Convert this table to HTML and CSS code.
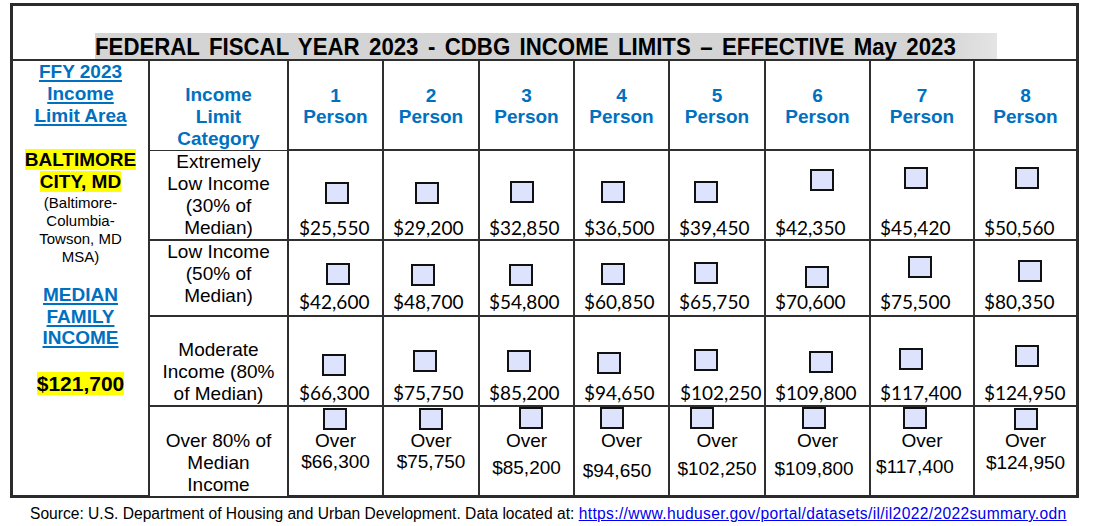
FILE: index.html
```html
<!DOCTYPE html>
<html>
<head>
<meta charset="utf-8">
<link rel="stylesheet" href="styles.css">
</head>
<body>
<div class="sheet">
  <div class="grid">
    <div class="title"><div class="title-bar"><span class="title-text">FEDERAL FISCAL YEAR 2023 - CDBG INCOME LIMITS – EFFECTIVE May 2023</span></div></div>
    <div class="area">
      <div class="blue ul head-area">FFY 2023<br>Income<br>Limit Area</div>
      <div class="city"><span class="hl">BALTIMORE<br>CITY, MD</span></div>
      <div class="msa">(Baltimore-<br>Columbia-<br>Towson, MD<br>MSA)</div>
      <div class="blue ul median">MEDIAN<br>FAMILY<br>INCOME</div>
      <div class="mfi"><span class="hl">$121,700</span></div>
    </div>
    <div class="hcat blue">Income<br>Limit<br>Category</div>
    <div class="hp blue">1<br>Person</div>
    <div class="hp blue">2<br>Person</div>
    <div class="hp blue">3<br>Person</div>
    <div class="hp blue">4<br>Person</div>
    <div class="hp blue">5<br>Person</div>
    <div class="hp blue">6<br>Person</div>
    <div class="hp blue">7<br>Person</div>
    <div class="hp blue">8<br>Person</div>

    <div class="row r1">
      <div class="cat">Extremely<br>Low Income<br>(30% of<br>Median)</div>
      <div class="d"><span class="cb"></span><span class="amt">$25,550</span></div>
      <div class="d"><span class="cb"></span><span class="amt">$29,200</span></div>
      <div class="d"><span class="cb"></span><span class="amt">$32,850</span></div>
      <div class="d"><span class="cb"></span><span class="amt">$36,500</span></div>
      <div class="d"><span class="cb"></span><span class="amt">$39,450</span></div>
      <div class="d"><span class="cb"></span><span class="amt">$42,350</span></div>
      <div class="d"><span class="cb"></span><span class="amt">$45,420</span></div>
      <div class="d"><span class="cb"></span><span class="amt">$50,560</span></div>
    </div>

    <div class="row r2">
      <div class="cat">Low Income<br>(50% of<br>Median)</div>
      <div class="d"><span class="cb"></span><span class="amt">$42,600</span></div>
      <div class="d"><span class="cb"></span><span class="amt">$48,700</span></div>
      <div class="d"><span class="cb"></span><span class="amt">$54,800</span></div>
      <div class="d"><span class="cb"></span><span class="amt">$60,850</span></div>
      <div class="d"><span class="cb"></span><span class="amt">$65,750</span></div>
      <div class="d"><span class="cb"></span><span class="amt">$70,600</span></div>
      <div class="d"><span class="cb"></span><span class="amt">$75,500</span></div>
      <div class="d"><span class="cb"></span><span class="amt">$80,350</span></div>
    </div>

    <div class="row r3">
      <div class="cat">Moderate<br>Income (80%<br>of Median)</div>
      <div class="d"><span class="cb"></span><span class="amt">$66,300</span></div>
      <div class="d"><span class="cb"></span><span class="amt">$75,750</span></div>
      <div class="d"><span class="cb"></span><span class="amt">$85,200</span></div>
      <div class="d"><span class="cb"></span><span class="amt">$94,650</span></div>
      <div class="d"><span class="cb"></span><span class="amt">$102,250</span></div>
      <div class="d"><span class="cb"></span><span class="amt">$109,800</span></div>
      <div class="d"><span class="cb"></span><span class="amt">$117,400</span></div>
      <div class="d"><span class="cb"></span><span class="amt">$124,950</span></div>
    </div>

    <div class="row r4">
      <div class="cat">Over 80% of<br>Median<br>Income</div>
      <div class="d"><span class="cb"></span><span class="over">Over</span><span class="oamt">$66,300</span></div>
      <div class="d"><span class="cb"></span><span class="over">Over</span><span class="oamt">$75,750</span></div>
      <div class="d"><span class="cb"></span><span class="over">Over</span><span class="oamt">$85,200</span></div>
      <div class="d"><span class="cb"></span><span class="over">Over</span><span class="oamt">$94,650</span></div>
      <div class="d"><span class="cb"></span><span class="over">Over</span><span class="oamt">$102,250</span></div>
      <div class="d"><span class="cb"></span><span class="over">Over</span><span class="oamt">$109,800</span></div>
      <div class="d"><span class="cb"></span><span class="over">Over</span><span class="oamt">$117,400</span></div>
      <div class="d"><span class="cb"></span><span class="over">Over</span><span class="oamt">$124,950</span></div>
    </div>
  </div>
  <p class="source">Source: U.S. Department of Housing and Urban Development. Data located at: <a class="link" href="#">https://www.huduser.gov/portal/datasets/il/il2022/2022summary.odn</a></p>
</div>
</body>
</html>
```

FILE: styles.css
```css
html, body {
  margin: 0;
  padding: 0;
  background: #ffffff;
}

body {
  font-family: "Liberation Sans", Arial, sans-serif;
  color: #000;
}

.sheet {
  padding: 3px 0 0 10px;
}

.grid {
  display: grid;
  width: max-content;
  grid-template-columns: 135px 137px 93px 94px 93px 93px 94px 103px 102px 101px;
  grid-template-rows: 53px 88px 88px 74px 88px 88px;
  gap: 2px;
  background: #2f2f2f;
  border: 3px solid #2b2b2b;
}

.grid > div:not(.row),
.row > div {
  background: #ffffff;
}

.row {
  display: contents;
}

/* title */
.title {
  grid-column: 1 / -1;
  display: flex;
  justify-content: center;
  align-items: flex-end;
}

.title-bar {
  width: 902px;
  height: 26px;
  margin-left: 2px;
  background: linear-gradient(to right, #d4d4d4 0, #d4d4d4 93%, #e4e4e4 100%);
  white-space: nowrap;
}

.title-text {
  display: inline-block;
  font-weight: bold;
  font-size: 24.5px;
  line-height: 27px;
  word-spacing: 3.6px;
  transform: scaleX(0.907);
  transform-origin: 0 50%;
}

.blue {
  color: #0070c0;
  font-weight: bold;
}

.ul {
  text-decoration: underline;
  text-decoration-thickness: 2px;
  text-underline-offset: 2px;
}

/* left column */
.area {
  grid-column: 1;
  grid-row: 2 / 7;
  display: flex;
  flex-direction: column;
  align-items: center;
  text-align: center;
}

.head-area {
  font-size: 19px;
  line-height: 22px;
}

.city {
  margin-top: 22px;
  font-weight: bold;
  font-size: 19px;
  line-height: 22px;
}

.hl {
  background: #ffff00;
}

.msa {
  font-size: 15px;
  line-height: 18px;
  margin-top: 1px;
}

.median {
  margin-top: 18px;
  font-size: 19px;
  line-height: 21.5px;
}

.mfi {
  margin-top: 23px;
  font-weight: bold;
  font-size: 21px;
  line-height: 24px;
}

/* header row */
.hcat {
  display: flex;
  flex-direction: column;
  justify-content: flex-end;
  text-align: center;
  font-size: 19px;
  line-height: 22px;
  margin-bottom: -1px;
  position: relative;
  z-index: 1;
}

.hp {
  text-align: center;
  font-size: 19px;
  line-height: 21px;
  padding-top: 24px;
}

/* category cells */
.cat {
  display: flex;
  flex-direction: column;
  justify-content: flex-end;
  text-align: center;
  font-size: 19px;
  line-height: 22px;
}

.r1 .cat {
  justify-content: center;
}

.r2 .cat {
  justify-content: flex-start;
}

.r4 .cat {
  margin-bottom: -1px;
}

/* data cells */
.d {
  display: flex;
  flex-direction: column;
  align-items: flex-start;
}

.cb {
  display: block;
  flex: none;
  width: 24px;
  height: 22px;
  box-sizing: border-box;
  border: 2px solid #111;
  background: #dde3fc;
}

.amt {
  margin-top: auto;
  padding-left: 9px;
  font-family: Lato, "Open Sans", sans-serif;
  font-size: 19px;
  line-height: 22px;
}

.r1 .d:nth-child(2) .amt,
.r2 .d:nth-child(2) .amt,
.r3 .d:nth-child(2) .amt {
  padding-left: 10px;
}

.r2 .amt {
  padding-bottom: 2px;
}

.r3 .amt {
  padding-bottom: 1px;
}

.r3 .d:nth-child(6) .amt {
  padding-left: 10px;
}

/* row 1 box positions */
.r1 .d:nth-child(2) .cb { margin: 31px 0 0 36px; }
.r1 .d:nth-child(3) .cb { margin: 31px 0 0 31px; }
.r1 .d:nth-child(4) .cb { margin: 30px 0 0 30px; }
.r1 .d:nth-child(5) .cb { margin: 30px 0 0 26px; }
.r1 .d:nth-child(6) .cb { margin: 30px 0 0 24px; }
.r1 .d:nth-child(7) .cb { margin: 18px 0 0 44px; }
.r1 .d:nth-child(8) .cb { margin: 16px 0 0 33px; }
.r1 .d:nth-child(9) .cb { margin: 16px 0 0 40px; }

/* row 2 box positions */
.r2 .d:nth-child(2) .cb { margin: 22px 0 0 37px; }
.r2 .d:nth-child(3) .cb { margin: 23px 0 0 27px; }
.r2 .d:nth-child(4) .cb { margin: 23px 0 0 29px; }
.r2 .d:nth-child(5) .cb { margin: 22px 0 0 26px; }
.r2 .d:nth-child(6) .cb { margin: 21px 0 0 24px; }
.r2 .d:nth-child(7) .cb { margin: 25px 0 0 39px; }
.r2 .d:nth-child(8) .cb { margin: 15px 0 0 37px; }
.r2 .d:nth-child(9) .cb { margin: 19px 0 0 43px; }

/* row 3 box positions */
.r3 .d:nth-child(2) .cb { margin: 37px 0 0 33px; }
.r3 .d:nth-child(3) .cb { margin: 33px 0 0 29px; }
.r3 .d:nth-child(4) .cb { margin: 33px 0 0 27px; }
.r3 .d:nth-child(5) .cb { margin: 35px 0 0 22px; }
.r3 .d:nth-child(6) .cb { margin: 32px 0 0 24px; }
.r3 .d:nth-child(7) .cb { margin: 34px 0 0 43px; }
.r3 .d:nth-child(8) .cb { margin: 31px 0 0 28px; }
.r3 .d:nth-child(9) .cb { margin: 28px 0 0 40px; }

/* row 4 */
.r4 .over,
.r4 .oamt {
  align-self: stretch;
  text-align: center;
  font-size: 19px;
  line-height: 21px;
}

.r4 .over {
  margin-top: 1px;
}

.r4 .d:nth-child(2) .cb { margin: 1px 0 0 34px; }
.r4 .d:nth-child(3) .cb { margin: 1px 0 0 35px; }
.r4 .d:nth-child(4) .cb { margin: 0 0 0 39px; }
.r4 .d:nth-child(5) .cb { margin: 0 0 0 25px; }
.r4 .d:nth-child(6) .cb { margin: 0 0 0 20px; }
.r4 .d:nth-child(7) .cb { margin: 0 0 0 36px; }
.r4 .d:nth-child(8) .cb { margin: 0 0 0 32px; }
.r4 .d:nth-child(9) .cb { margin: 1px 0 0 39px; }

.r4 .d:nth-child(2) .over,
.r4 .d:nth-child(3) .over,
.r4 .d:nth-child(9) .over { margin-top: 0; }

.r4 .d:nth-child(4) .oamt { margin-top: 6px; }
.r4 .d:nth-child(5) .oamt { margin-top: 9px; padding-right: 9px; }
.r4 .d:nth-child(6) .oamt { margin-top: 7px; }
.r4 .d:nth-child(7) .oamt { margin-top: 7px; padding-right: 7px; }
.r4 .d:nth-child(8) .oamt { margin-top: 5px; padding-right: 14px; }
.r4 .d:nth-child(9) .oamt { margin-top: 1px; }

/* footer */
.source {
  margin: 7px 0 0 20px;
  font-size: 15.6px;
  line-height: 18px;
  white-space: nowrap;
}

.link {
  color: #0000ee;
  text-decoration: underline;
  letter-spacing: 0.35px;
}
```
